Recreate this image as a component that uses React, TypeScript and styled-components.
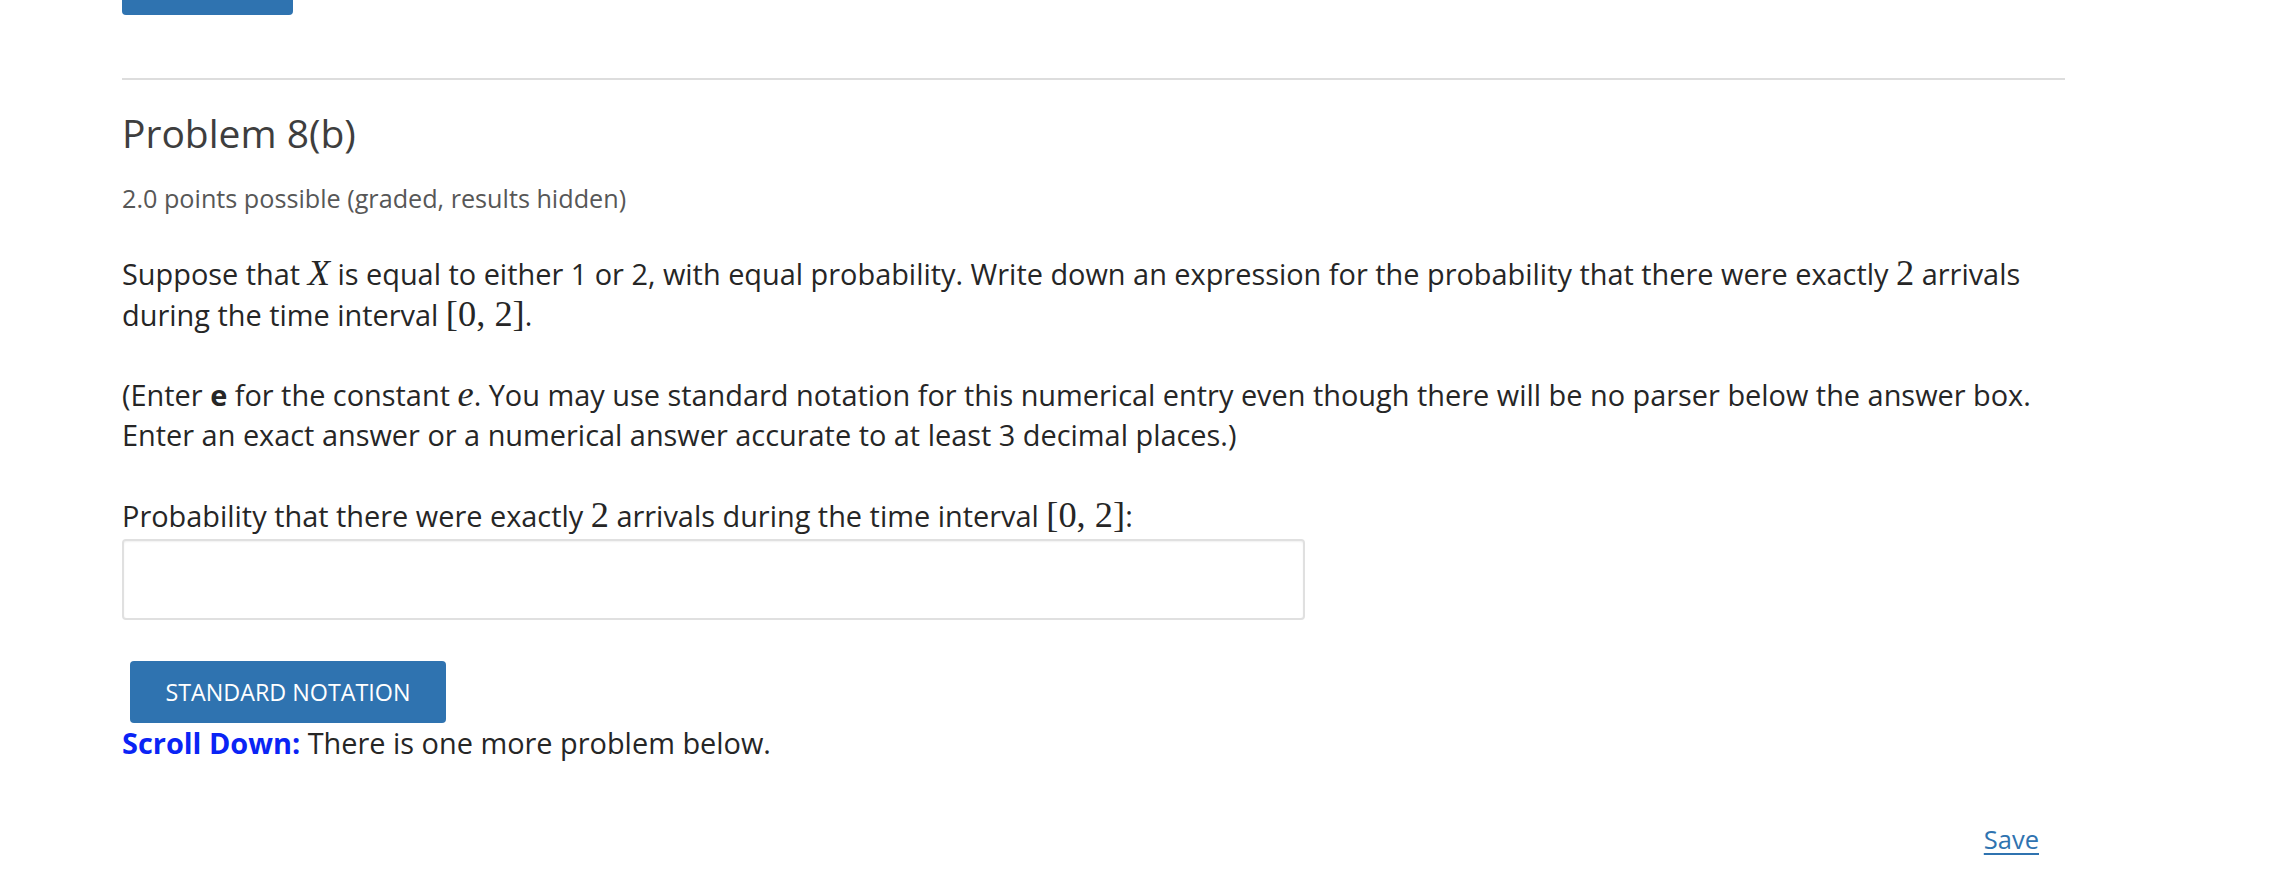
import React from "react";
import styled, { createGlobalStyle } from "styled-components";

const GlobalStyle = createGlobalStyle`
  html, body {
    margin: 0;
    padding: 0;
    background: #fff;
  }
  body {
    font-family: "Open Sans", "Noto Sans", sans-serif;
    color: #262626;
  }
`;

const Page = styled.div`
  width: 1943px;
  margin-left: 122px;
`;

const PrevButton = styled.div`
  width: 171px;
  height: 15px;
  background: #2f73b0;
  border-radius: 0 0 4px 4px;
`;

const Divider = styled.hr`
  margin: 63px 0 0;
  border: none;
  height: 2px;
  background: #dddddd;
`;

const ProblemTitle = styled.h3`
  margin: 30px 0 0;
  font-size: 39px;
  font-weight: 400;
  line-height: 1.2;
  color: #3e3e3e;
`;

const Meta = styled.div`
  margin-top: 24px;
  font-size: 25.2px;
  line-height: 1.4;
  color: #575757;
`;

const Para = styled.p<{ $gap?: number }>`
  margin: ${({ $gap }) => $gap ?? 40}px 0 0;
  font-size: 28.9px;
  line-height: 1.4;
`;

const Math = styled.span<{ $italic?: boolean }>`
  font-family: "Liberation Serif", "DejaVu Serif", serif;
  font-style: ${({ $italic }) => ($italic ? "italic" : "normal")};
  font-size: 1.26em;
  line-height: 1;
`;

const Label = styled.label`
  display: block;
  margin-top: 40px;
  font-size: 28.9px;
  line-height: 1.4;
`;

const AnswerInput = styled.input`
  display: block;
  box-sizing: border-box;
  margin-top: 3px;
  width: 1183px;
  height: 81px;
  border: 2px solid #e0e0e0;
  border-radius: 4px;
  box-shadow: inset 0 1px 2px rgba(0, 0, 0, 0.06);
  background: #fff;
  font-size: 28px;
  padding: 0 16px;
  outline: none;
`;

const NotationButton = styled.button`
  display: block;
  margin: 41px 0 0 8px;
  width: 316px;
  height: 62px;
  border: none;
  border-radius: 4px;
  background: #2f73b0;
  color: #fff;
  font-family: "Open Sans", "Noto Sans", sans-serif;
  font-size: 23.3px;
  text-transform: uppercase;
  padding: 0;
`;

const ScrollNote = styled.div`
  font-size: 28.9px;
  line-height: 1.4;
`;

const ScrollLead = styled.strong`
  color: #0a24f5;
  font-weight: 700;
`;

const Actions = styled.div`
  display: flex;
  justify-content: flex-end;
  margin-top: 58px;
  padding-right: 26px;
`;

const SaveLink = styled.a`
  font-size: 25.5px;
  line-height: 1.4;
  color: #2f73b0;
  text-decoration: underline;
  text-underline-offset: 4px;
  cursor: pointer;
`;

const App = () => {
  return (
    <>
      <GlobalStyle />
      <Page>
        <PrevButton />
        <Divider />
        <ProblemTitle>Problem 8(b)</ProblemTitle>
        <Meta>2.0 points possible (graded, results hidden)</Meta>
        <Para $gap={38}>
          Suppose that <Math $italic>X</Math> is equal to either 1 or 2, with
          equal probability. Write down an expression for the probability that
          there were exactly <Math>2</Math> arrivals during the time interval{" "}
          <Math>[0, 2]</Math>.
        </Para>
        <Para>
          (Enter <b>e</b> for the constant <Math $italic>e</Math>. You may use
          standard notation for this numerical entry even though there will be
          no parser below the answer box. Enter an exact answer or a numerical
          answer accurate to at least 3 decimal places.)
        </Para>
        <Label htmlFor="answer">
          Probability that there were exactly <Math>2</Math> arrivals during
          the time interval <Math>[0, 2]</Math>:
        </Label>
        <AnswerInput id="answer" type="text" />
        <NotationButton>Standard Notation</NotationButton>
        <ScrollNote>
          <ScrollLead>Scroll Down:</ScrollLead> There is one more problem
          below.
        </ScrollNote>
        <Actions>
          <SaveLink>Save</SaveLink>
        </Actions>
      </Page>
    </>
  );
};

export default App;
